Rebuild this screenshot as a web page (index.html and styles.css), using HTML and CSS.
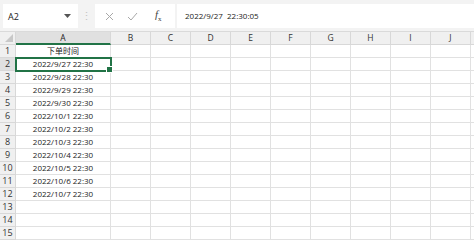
FILE: index.html
```html
<!DOCTYPE html>
<html lang="zh-CN">
<head>
    <meta charset="UTF-8">
    <title>下单时间</title>
    <link rel="stylesheet" href="styles.css">
</head>
<body>
<div class="toolbar">
    <div class="nameBox">
        <span>A2</span>
        <svg class="arrow" width="7" height="4" viewBox="0 0 7 4"><path d="M0 0h7L3.5 4z" fill="#555"/></svg>
    </div>
    <div class="dots">⋮</div>
    <div class="fxBox">
        <svg class="x" width="9" height="9" viewBox="0 0 9 9"><path d="M1 1l7 7M8 1l-7 7" stroke="#a8a8a8" stroke-width="1" fill="none"/></svg>
        <svg class="ok" width="11" height="9" viewBox="0 0 11 9"><path d="M1 5l3 3 6-7" stroke="#a8a8a8" stroke-width="1" fill="none"/></svg>
        <span class="fx"><i>f</i><sub>x</sub></span>
    </div>
    <div class="formula">2022/9/27&nbsp;&nbsp;22:30:05</div>
</div>
<div class="sheet">
    <div class="corner"><svg width="8" height="8" viewBox="0 0 8 8"><path d="M8 0v8H0z" fill="#c8c8c8"/></svg></div>
    <div class="colHead on">A</div>
    <div class="colHead">B</div>
    <div class="colHead">C</div>
    <div class="colHead">D</div>
    <div class="colHead">E</div>
    <div class="colHead">F</div>
    <div class="colHead">G</div>
    <div class="colHead">H</div>
    <div class="colHead">I</div>
    <div class="colHead">J</div>
    <div class="colHead"></div>
</div>
<script>
    var data=['下单时间','2022/9/27 22:30','2022/9/28 22:30','2022/9/29 22:30','2022/9/30 22:30',
        '2022/10/1 22:30','2022/10/2 22:30','2022/10/3 22:30','2022/10/4 22:30','2022/10/5 22:30',
        '2022/10/6 22:30','2022/10/7 22:30','','',''];
    var oSheet=document.querySelector('.sheet');
    var str='';
    for(var i=0; i<data.length; i++){
        str+='<div class="rowHead'+(i==1?' on':'')+'">'+(i+1)+'</div>';
        str+='<div class="cell'+(i==1?' active':'')+'">'+data[i]+'</div>';
        for(var j=0; j<10; j++){
            str+='<div class="cell"></div>';
        }
    }
    oSheet.innerHTML+=str;
</script>
</body>
</html>
```

FILE: styles.css
```css
*{
    margin:0;
    padding:0;
    box-sizing: border-box;
}
body,html{
    height: 100%;
    overflow: hidden;
    background: #fff;
    font-family: "Open Sans", "Noto Sans CJK SC", sans-serif;
    color: #222;
}
.toolbar{
    height: 32px;
    background: #f3f3f3;
    border-bottom: 1px solid #dadada;
    display: flex;
    align-items: flex-start;
    padding: 4px 0 0 3px;
}
.nameBox{
    width: 75px;
    height: 24px;
    background: #fff;
    display: flex;
    align-items: center;
    justify-content: space-between;
    padding: 0 7px 0 5px;
    font-size: 9px;
}
.dots{
    width: 17px;
    height: 24px;
    line-height: 24px;
    text-align: center;
    color: #c4c4c4;
    font-size: 11px;
}
.fxBox{
    width: 80px;
    height: 24px;
    background: #fff;
    display: flex;
    align-items: center;
    padding-left: 10px;
}
.fxBox .ok{
    margin-left: 13px;
}
.fx{
    margin-left: 17px;
    font-family: "Liberation Serif", serif;
    font-size: 11px;
    color: #444;
}
.fx sub{
    font-size: 7px;
}
.formula{
    flex: 1;
    height: 24px;
    margin-left: 2px;
    background: #fff;
    font-size: 8px;
    line-height: 24px;
    padding-left: 8px;
}
.sheet{
    display: grid;
    grid-template-columns: 16px 95px repeat(9, 40px) 40px;
    grid-auto-rows: 13px;
    overflow: hidden;
    width: 474px;
}
.corner,.colHead,.rowHead{
    background: #f0f0f0;
    border-right: 1px solid #d8d8d8;
    border-bottom: 1px solid #d8d8d8;
    font-size: 8.5px;
    color: #333;
}
.corner{
    display: flex;
    align-items: flex-end;
    justify-content: flex-end;
    padding: 0 2px 2px 0;
}
.colHead{
    text-align: center;
    line-height: 12px;
}
.colHead.on{
    background: #e0e0e0;
    border-bottom: 2px solid #217346;
    color: #222;
}
.rowHead{
    text-align: center;
    line-height: 12px;
    font-size: 9px;
}
.rowHead.on{
    background: #e0e0e0;
}
.cell{
    border-right: 1px solid #e1e1e1;
    border-bottom: 1px solid #e1e1e1;
    font-size: 8px;
    line-height: 12px;
    text-align: center;
    white-space: nowrap;
}
.cell.active{
    position: relative;
    outline: 2px solid #217346;
    outline-offset: -1px;
}
.cell.active:after{
    content: '';
    position: absolute;
    right: -3px;
    bottom: -3px;
    width: 5px;
    height: 5px;
    background: #217346;
    border: 1px solid #fff;
}
```
